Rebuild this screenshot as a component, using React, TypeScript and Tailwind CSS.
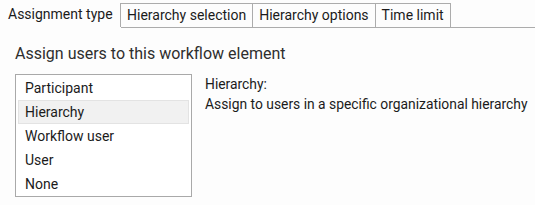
const tabs = ["Assignment type", "Hierarchy selection", "Hierarchy options", "Time limit"];
const options = ["Participant", "Hierarchy", "Workflow user", "User", "None"];

export default function App() {
  const selectedTab = 0;
  const selectedOption = 1;

  return (
    <div
      className="w-[535px] h-[205px] bg-[#fdfdfd] text-[#1b1b1b] overflow-hidden"
      style={{ fontFamily: 'Roboto, "Open Sans", sans-serif' }}
    >
      {/* Tab strip */}
      <div className="flex h-[28px] items-end">
        {tabs.map((t, i) =>
          i === selectedTab ? (
            <div key={t} className="h-[28px] w-[121px] shrink-0 pl-[8px] pt-[5px] text-[14px] leading-[18px] bg-[#fdfdfd]">
              {t}
            </div>
          ) : (
            <div key={t} className="h-[28px] flex flex-col shrink-0">
              <div className="mt-[3px] flex-1 border border-b-0 border-[#acacac] px-[6px] pt-[2px] text-[14px] leading-[18px] bg-[#fdfdfd] -ml-px whitespace-nowrap">
                {t}
              </div>
              <div className="h-px bg-[#acacac]" />
            </div>
          )
        )}
        <div className="flex-1 h-px bg-[#acacac]" />
      </div>

      {/* Content */}
      <div className="px-[15px] pt-[14px]">
        <div className="text-[16px] leading-[23px] text-[#2e2e2e] whitespace-nowrap">
          Assign users to this workflow element
        </div>
        <div className="mt-[9px] flex gap-[13px]">
          <div className="w-[177px] h-[123px] shrink-0 border border-[#a9a9a9] bg-white px-[2px] py-[1px]">
            {options.map((o, i) => (
              <div
                key={o}
                className={`h-[24px] flex items-center pl-[6px] text-[14px] border ${
                  i === selectedOption ? "bg-[#f1f1f1] border-[#e3e3e3]" : "border-transparent"
                }`}
              >
                {o}
              </div>
            ))}
          </div>
          <div className="text-[13.85px] leading-[20px] whitespace-nowrap">
            <div>Hierarchy:</div>
            <div>Assign to users in a specific organizational hierarchy</div>
          </div>
        </div>
      </div>
    </div>
  );
}
